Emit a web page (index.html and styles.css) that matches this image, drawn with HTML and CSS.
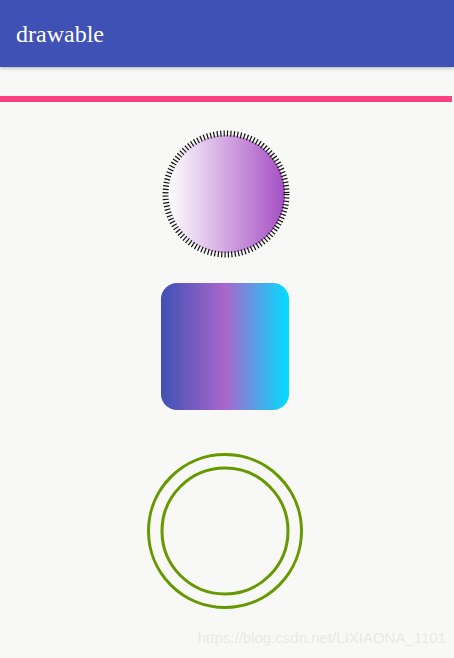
FILE: index.html
```html
<!DOCTYPE html>
<html>
<head>
<meta charset="utf-8">
<link rel="stylesheet" href="styles.css">
</head>
<body>
<header class="appbar"><span class="title">drawable</span></header>
<main class="content">
  <div class="pink-line"></div>
  <svg class="dash-circle" width="128" height="128" viewBox="0 0 128 128">
    <defs>
      <linearGradient id="g1" x1="0" y1="0" x2="1" y2="0">
        <stop offset="0" stop-color="#ffffff"/>
        <stop offset="1" stop-color="#a54fc3"/>
      </linearGradient>
    </defs>
    <circle cx="64" cy="64" r="59" fill="url(#g1)"/>
    <circle cx="64" cy="64" r="60.5" fill="none" stroke="#111" stroke-width="6" stroke-dasharray="1.2 2.2"/>
  </svg>
  <div class="grad-square"></div>
  <svg class="rings" width="158" height="158" viewBox="0 0 158 158">
    <circle cx="79" cy="79" r="76.5" fill="none" stroke="#669900" stroke-width="3"/>
    <circle cx="79" cy="79" r="63" fill="none" stroke="#669900" stroke-width="3"/>
  </svg>
</main>
<div class="watermark">https://blog.csdn.net/LIXIAONA_1101</div>
</body>
</html>
```
FILE: styles.css
```css
html, body {
  margin: 0;
  padding: 0;
  background: #f8f9f7;
  width: 454px;
  height: 658px;
  overflow: hidden;
}
.appbar {
  height: 67px;
  background: #3f51b5;
  box-shadow: 0 1px 4px rgba(0,0,0,0.3);
  display: flex;
  align-items: center;
  padding-left: 16px;
  box-sizing: border-box;
  position: relative;
}
.title {
  color: #ffffff;
  font-family: "Liberation Serif", "DejaVu Serif", serif;
  font-size: 24px;
  margin-top: 2px;
}
.content {
  display: flex;
  flex-direction: column;
  align-items: center;
  padding-right: 4px;
}
.pink-line {
  align-self: flex-start;
  width: 452px;
  height: 6px;
  background: #ff4081;
  margin-top: 29px;
}
.dash-circle {
  display: block;
  margin-top: 28px;
  margin-left: 1px;
}
.grad-square {
  width: 128px;
  height: 127px;
  margin-top: 25px;
  border-radius: 16px;
  background: linear-gradient(to right, #3f51b5, #aa66cc 50%, #00ddff);
}
.rings {
  display: block;
  margin-top: 42px;
}
.watermark {
  position: absolute;
  right: 8px;
  top: 629px;
  font-family: "Liberation Sans", Arial, sans-serif;
  font-size: 15px;
  color: #e8e9e7;
}
```
